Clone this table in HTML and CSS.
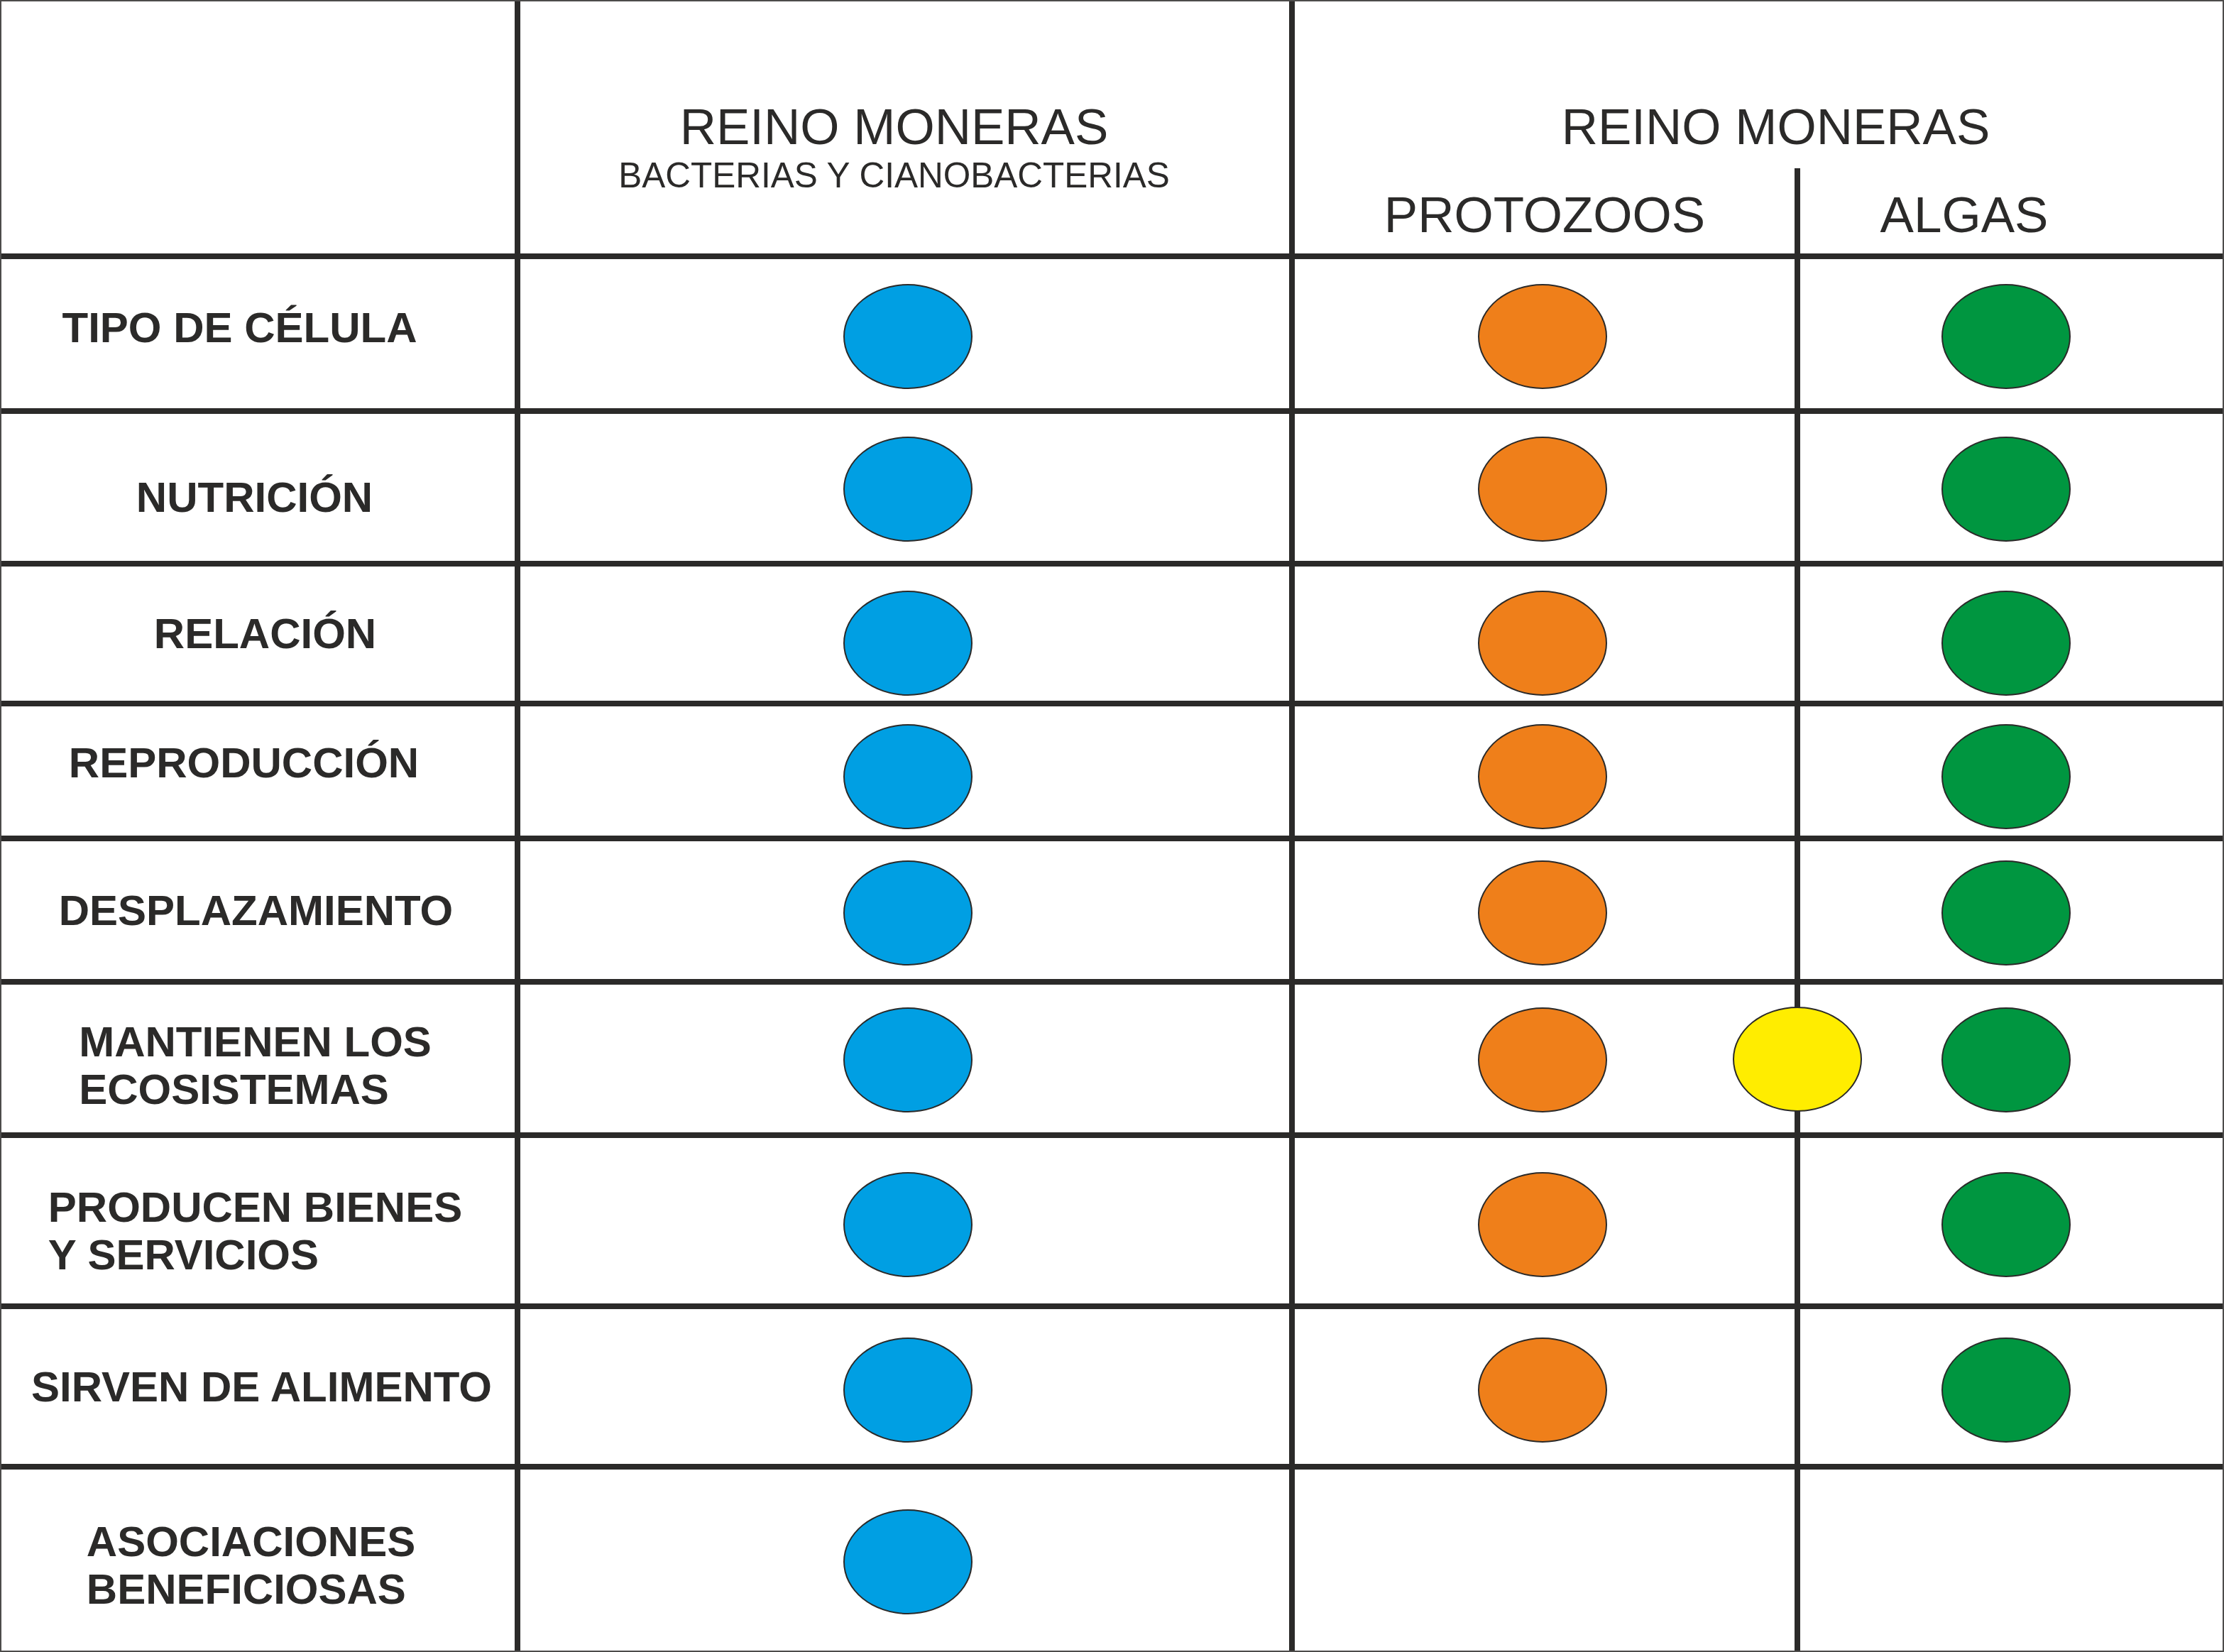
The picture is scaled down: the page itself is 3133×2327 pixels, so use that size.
FILE: index.html
```html
<!DOCTYPE html>
<html lang="es">
<head>
<meta charset="utf-8">
<title>Reino Moneras</title>
<link rel="stylesheet" href="styles.css">
</head>
<body>
<div class="chart">
  <div class="row head-row">
    <div class="cell head corner"></div>
    <div class="cell head head-b">
      <div class="head-title">REINO MONERAS</div>
      <div class="head-sub">BACTERIAS Y CIANOBACTERIAS</div>
    </div>
    <div class="cell head head-cd">
      <div class="head-title head-title--cd">REINO MONERAS</div>
      <div class="subheads">
        <div class="subhead subhead--proto">PROTOZOOS</div>
        <div class="subhead subhead--algas">ALGAS</div>
      </div>
    </div>
  </div>

  <div class="row r1">
    <div class="cell lbl">TIPO DE CÉLULA</div>
    <div class="cell data col-b"><span class="dot blue"></span></div>
    <div class="cell data col-c"><span class="dot orange"></span></div>
    <div class="cell data col-d"><span class="dot green"></span></div>
  </div>

  <div class="row r2">
    <div class="cell lbl">NUTRICIÓN</div>
    <div class="cell data col-b"><span class="dot blue"></span></div>
    <div class="cell data col-c"><span class="dot orange"></span></div>
    <div class="cell data col-d"><span class="dot green"></span></div>
  </div>

  <div class="row r3">
    <div class="cell lbl">RELACIÓN</div>
    <div class="cell data col-b"><span class="dot blue"></span></div>
    <div class="cell data col-c"><span class="dot orange"></span></div>
    <div class="cell data col-d"><span class="dot green"></span></div>
  </div>

  <div class="row r4">
    <div class="cell lbl">REPRODUCCIÓN</div>
    <div class="cell data col-b"><span class="dot blue"></span></div>
    <div class="cell data col-c"><span class="dot orange"></span></div>
    <div class="cell data col-d"><span class="dot green"></span></div>
  </div>

  <div class="row r5">
    <div class="cell lbl">DESPLAZAMIENTO</div>
    <div class="cell data col-b"><span class="dot blue"></span></div>
    <div class="cell data col-c"><span class="dot orange"></span></div>
    <div class="cell data col-d"><span class="dot green"></span></div>
  </div>

  <div class="row r6">
    <div class="cell lbl">MANTIENEN LOS<br>ECOSISTEMAS</div>
    <div class="cell data col-b"><span class="dot blue"></span></div>
    <div class="cell data col-c shared"><span class="dot orange"></span><span class="dot yellow straddle"></span></div>
    <div class="cell data col-d"><span class="dot green"></span></div>
  </div>

  <div class="row r7">
    <div class="cell lbl">PRODUCEN BIENES<br>Y SERVICIOS</div>
    <div class="cell data col-b"><span class="dot blue"></span></div>
    <div class="cell data col-c"><span class="dot orange"></span></div>
    <div class="cell data col-d"><span class="dot green"></span></div>
  </div>

  <div class="row r8">
    <div class="cell lbl">SIRVEN DE ALIMENTO</div>
    <div class="cell data col-b"><span class="dot blue"></span></div>
    <div class="cell data col-c"><span class="dot orange"></span></div>
    <div class="cell data col-d"><span class="dot green"></span></div>
  </div>

  <div class="row r9 last-row">
    <div class="cell lbl">ASOCIACIONES<br>BENEFICIOSAS</div>
    <div class="cell data col-b"><span class="dot blue"></span></div>
    <div class="cell data col-c"></div>
    <div class="cell data col-d"></div>
  </div>
</div>
</body>
</html>
```

FILE: styles.css
```css
html, body {
  margin: 0;
  padding: 0;
  background: #ffffff;
}

.chart {
  box-sizing: border-box;
  width: 3133px;
  height: 2327px;
  border: 2px solid #4d4c4b;
  display: grid;
  grid-template-columns: 731px 1091px 712px 595px;
  grid-template-rows: 363px 218px 215px 197px 190px 202px 216px 241px 226px 255px;
  font-family: "Liberation Sans", Arial, sans-serif;
  color: #2b2a29;
  background: #ffffff;
}

.row {
  display: contents;
}

.cell {
  box-sizing: border-box;
  border-right: 8px solid #2b2a29;
  border-bottom: 8px solid #2b2a29;
  min-width: 0;
}

.col-d,
.head-cd {
  border-right: none;
}

.last-row .cell {
  border-bottom: none;
}

/* Header */
.head {
  display: flex;
  flex-direction: column;
}

.head-b {
  align-items: center;
  padding-top: 137px;
  padding-right: 30px;
}

.head-title {
  font-size: 71px;
  line-height: 80px;
  white-space: nowrap;
}

.head-sub {
  font-size: 49.5px;
  line-height: 56px;
  white-space: nowrap;
}

.head-cd {
  grid-column: span 2;
  padding-top: 137px;
}

.head-title--cd {
  text-align: center;
  padding-left: 48px;
}

.subheads {
  margin-top: auto;
  height: 120px;
  display: flex;
}

.subhead {
  box-sizing: border-box;
  font-size: 71px;
  line-height: 80px;
  padding-top: 26px;
  text-align: center;
  white-space: nowrap;
}

.subhead--proto {
  width: 712px;
  border-right: 8px solid #2b2a29;
}

.subhead--algas {
  flex: 1;
  padding-right: 133px;
}

/* Row labels */
.lbl {
  display: flex;
  align-items: center;
  justify-content: center;
  font-weight: bold;
  font-size: 60px;
  line-height: 67px;
  text-align: left;
  white-space: nowrap;
}

.r1 .lbl { padding-bottom: 18px; padding-right: 52px; }
.r2 .lbl { padding-top: 28px; padding-right: 10px; }
.r3 .lbl { padding-left: 20px; }
.r4 .lbl { padding-bottom: 24px; padding-right: 40px; }
.r5 .lbl { padding-right: 6px; }
.r6 .lbl { padding-top: 20px; padding-right: 8px; }
.r7 .lbl { padding-top: 28px; padding-right: 8px; }
.r8 .lbl { padding-left: 10px; }
.r9 .lbl { padding-top: 14px; padding-right: 20px; }

/* Data cells */
.data {
  display: flex;
  align-items: center;
  justify-content: center;
  padding-top: 8px;
}

.col-b { padding-left: 9px; }
.col-c { padding-right: 6px; }
.col-d { padding-right: 16px; }

.r2 .data { padding-top: 5px; }
.r3 .data { padding-top: 26px; }
.r4 .data { padding-top: 16px; }
.r6 .data { padding-top: 4px; }
.r7 .data,
.r8 .data { padding-top: 10px; }
.r9 .data { padding-top: 4px; }

.shared {
  position: relative;
}

.dot {
  box-sizing: border-box;
  display: block;
  width: 182px;
  height: 148px;
  border-radius: 50%;
  border: 2px solid #2b2a29;
}

.blue { background: #009fe3; }
.orange { background: #ef7f1a; }
.green { background: #009640; }
.yellow { background: #ffed00; }

.straddle {
  position: absolute;
  top: calc(50% + 1px);
  left: calc(100% + 4px);
  transform: translate(-50%, -50%);
  z-index: 2;
}
```
